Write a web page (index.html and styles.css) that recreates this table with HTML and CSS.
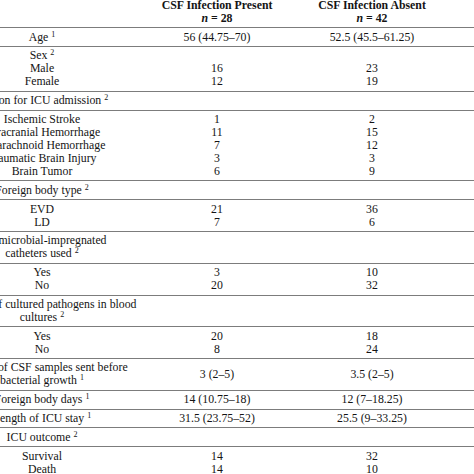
FILE: index.html
```html
<!DOCTYPE html>
<html>
<head>
<meta charset="utf-8">
<link rel="stylesheet" href="styles.css">
</head>
<body>
<table class="tbl">
  <colgroup><col class="c1"><col class="c2"><col class="c3"></colgroup>
  <thead>
    <tr>
      <th></th>
      <th>CSF Infection Present<br><i>n</i> = 28</th>
      <th class="last">CSF Infection Absent<br><i>n</i> = 42</th>
    </tr>
  </thead>
  <tbody>
    <tr><td>Age <sup>1</sup></td><td>56 (44.75–70)</td><td class="last">52.5 (45.5–61.25)</td></tr>
    <tr><td>Sex <sup>2</sup><br>Male<br>Female</td><td><br>16<br>12</td><td class="last"><br>23<br>19</td></tr>
    <tr><td>Reason for ICU admission <sup>2</sup></td><td></td><td class="last"></td></tr>
    <tr><td>Ischemic Stroke<br>Intracranial Hemorrhage<br>Subarachnoid Hemorrhage<br>Traumatic Brain Injury<br>Brain Tumor</td><td>1<br>11<br>7<br>3<br>6</td><td class="last">2<br>15<br>12<br>3<br>9</td></tr>
    <tr><td>Foreign body type <sup>2</sup></td><td></td><td class="last"></td></tr>
    <tr><td>EVD<br>LD</td><td>21<br>7</td><td class="last">36<br>6</td></tr>
    <tr><td>Antimicrobial-impregnated<br>catheters used <sup>2</sup></td><td></td><td class="last"></td></tr>
    <tr><td>Yes<br>No</td><td>3<br>20</td><td class="last">10<br>32</td></tr>
    <tr><td>Presence of cultured pathogens in blood<br>cultures <sup>2</sup></td><td></td><td class="last"></td></tr>
    <tr><td>Yes<br>No</td><td>20<br>8</td><td class="last">18<br>24</td></tr>
    <tr><td>Number of CSF samples sent before<br>bacterial growth <sup>1</sup></td><td>3 (2–5)</td><td class="last">3.5 (2–5)</td></tr>
    <tr><td>Foreign body days <sup>1</sup></td><td>14 (10.75–18)</td><td class="last">12 (7–18.25)</td></tr>
    <tr><td>Length of ICU stay <sup>1</sup></td><td>31.5 (23.75–52)</td><td class="last">25.5 (9–33.25)</td></tr>
    <tr><td>ICU outcome <sup>2</sup></td><td></td><td class="last"></td></tr>
    <tr class="end"><td>Survival<br>Death</td><td>14<br>14</td><td class="last">32<br>10</td></tr>
  </tbody>
</table>
</body>
</html>
```
FILE: styles.css
```css
html, body {
  margin: 0;
  padding: 0;
  background: #fff;
  overflow: hidden;
  width: 474px;
  height: 474px;
}
.tbl {
  border-collapse: collapse;
  table-layout: fixed;
  width: 560px;
  margin-left: -60px;
  margin-top: -3.5px;
  font-family: "Liberation Serif", "Times New Roman", serif;
  font-size: 11.8px;
  line-height: 13px;
  color: #141414;
}
.c1 { width: 204px; }
.c2 { width: 146px; }
.c3 { width: 210px; }
.tbl th, .tbl td {
  padding: 2.4px 0;
  text-align: center;
  vertical-align: middle;
  border-bottom: 1px solid #7c7c7c;
  font-weight: normal;
  white-space: nowrap;
}
.tbl th { font-weight: bold; }
.tbl th i { font-weight: bold; }
.tbl .last { padding-right: 46px; }
.tbl sup {
  font-size: 8px;
  line-height: 0;
  vertical-align: 4px;
}
.tbl tr.end td { border-bottom: none; }
```
